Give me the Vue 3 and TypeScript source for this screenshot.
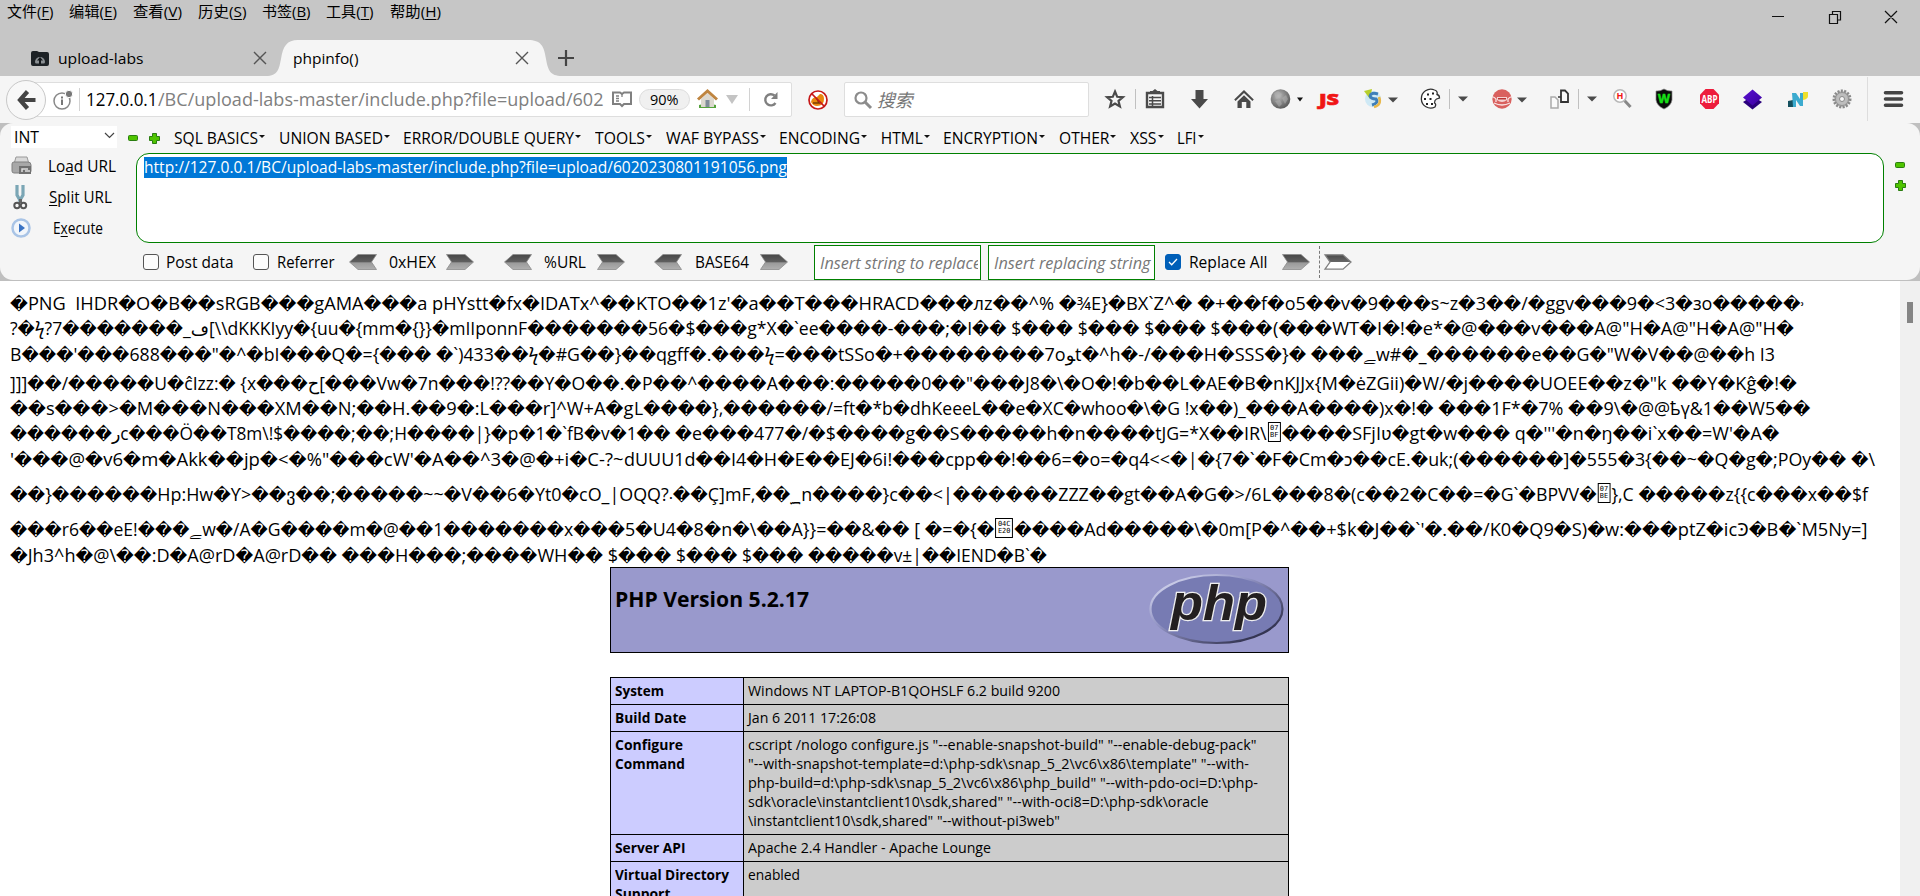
<script setup lang="ts">
import type { Directive } from 'vue'

interface Menu { label: string; key?: string; w: number }
interface Piece { text: string; kind: 'text' | 'box' | 'mark' }
interface Segment { text: string; w: number }
interface Line { h: number; segs: Segment[] }
interface Cell { text: string; w: number }

// Condenses a run of text so that it takes exactly the given width.
const vFit: Directive<HTMLElement, number> = {
  mounted(el, { value }) {
    const natural = el.getBoundingClientRect().width
    el.style.width = `${value}px`
    el.style.transform = `scaleX(${value / natural})`
  }
}

const menus: Menu[] = [
  { label: '文件', key: 'F', w: 46.5 },
  { label: '编辑', key: 'E', w: 48 },
  { label: '查看', key: 'V', w: 49 },
  { label: '历史', key: 'S', w: 48.5 },
  { label: '书签', key: 'B', w: 48.5 },
  { label: '工具', key: 'T', w: 47.5 },
  { label: '帮助', key: 'H', w: 51 }
]

const hackMenus: Menu[] = [
  { label: 'SQL BASICS', w: 84 },
  { label: 'UNION BASED', w: 104 },
  { label: 'ERROR/DOUBLE QUERY', w: 171 },
  { label: 'TOOLS', w: 50 },
  { label: 'WAF BYPASS', w: 93 },
  { label: 'ENCODING', w: 81 },
  { label: 'HTML', w: 42 },
  { label: 'ENCRYPTION', w: 95 },
  { label: 'OTHER', w: 50.5 },
  { label: 'XSS', w: 26.5 },
  { label: 'LFI', w: 19.5 }
]

const makeLine = (h: number, xs: number[], texts: string[]): Line => ({
  h,
  segs: texts.map((text, i) => ({ text, w: xs[i + 1] - xs[i] }))
})

const lines: Line[] = [
  makeLine(25, [10, 635.5, 1261, 1804], [
    '�PNG  IHDR�O�B��sRGB���gAMA���a pHYstt�fx�IDATx^��',
    "KTO��1z'�a��T���HRACD���лz��^% �¾E}�BX`Z^� �+��",
    'f�o5��v�9���s~z�3��/�ggv���9�<3�зo�����˒'
  ]),
  makeLine(25, [10, 648, 1272.5, 1793.5], [
    '?�ϟ?7�������_ڡ[\\\\dKKKIyy�{uu�{mm�{}}�mIIponnF�������',
    '56�$���g*X�`ee����-���;�I�� $��� $��� $��� $���',
    '(���WT�I�!�e*�@���v���A@"H�A@"H�A@"H�'
  ]),
  makeLine(26, [10, 656, 1282, 1775], [
    'B���\'���688���"�^�bI���Q�={��� �`)433��ϟ�#G��}��',
    'qgff�.���ϟ=���tSSo�+��������7oﻮt�^h�-/���H�SSS�',
    '}� ���ﮯw#�_������e��G�"W�V��@��h I3'
  ]),
  makeLine(29, [10, 641.5, 1272.5, 1796.5], [
    ']]]��/�����U�ĉIzz:� {x���ح[���Vw�7n���!??��Y�O��.�',
    'P��^����A���:�����0��"���J8�\\�O�!�b��L�AE�B�',
    'nKJJx{M�ėZGii)�W/�j����UOEE��z�"k ��Y�Kĝ�!�'
  ]),
  makeLine(25, [10, 633.5, 1297, 1810.5], [
    '��s���>�M���N���XM��N;��H.��9�:L���r]^W+A�g',
    'L����},������/=ft�*b�dhKeeeL��e�XC�whoo�\\�G !x��)_���',
    'A����)x�!� ���1F*�7% ��9\\�@@ҍү&1��W5��'
  ]),
  makeLine(25, [10, 692, 1244, 1779.5], [
    '������رc���Ö��T8m\\!$����;��;H����|}�p�1�`fB�v�1�� �',
    'e���477�/�$����g��S�����h�n����tJG=*X��',
    "IR\\07BF|����SFjIʋ�gt�w��� q�'''�n�ŋ��i`x��=W'�A�"
  ]),
  makeLine(26, [10, 623.5, 1272, 1875], [
    '\'���@�v6�m�Akk��jp�<�%"���cW\'�A��^3�@�+i�C-?~',
    'dUUU1d��I4�H�E��EJ�6i!���cpp��!��6=�o=�q4<<�|�{7�`�',
    'F�Cm�ͻ��cE.�uk;(������]�555�3{��~�Q�g�;POy�� �\\'
  ]),
  makeLine(35, [10, 661, 1261.5, 1867.5], [
    '��}������Hp:Hw�ϒ>��ვ��;�����~~�V��6�Yt0�cO_|OQQ',
    '?܁��Ç]mF,��؁n����}c��<|������ZZZ��gt��A�G�>/6',
    'L���8�(c��2�C��=�G`�BPVV�07BE|},C �����z{{c���x��$f'
  ]),
  makeLine(35, [10, 625, 1251, 1867.5], [
    '���r6��eE!���ﮯw�/A�G����m�@��1�������x���',
    '5�U4�8�n�\\��A}}=��&�� [ �=�{�04CE20|����Ad�����\\�0m[',
    "P�^��+$k�J��`'�.��/K0�Q9�S)�w:���ptZ�icϿ�B�`M5Ny=]"
  ]),
  makeLine(26, [10, 676, 1047], [
    '�Jh3^h�@\\��:D�A@rD�A@rD�� ���H���;����WH�� $��� ',
    '$��� $��� �����v±|��IEND�B`�'
  ])
]

// Splits a run into plain text, replacement marks and hex boxes for unmapped code points.
const split = (text: string): Piece[] =>
  text.split(/(�|07BF\||07BE\||04CE20\|)/).filter(Boolean).map((t) => {
    if (t === '�') return { text: t, kind: 'mark' }
    if (/^0[47][0-9A-F]+\|$/.test(t)) return { text: t.slice(0, -1), kind: 'box' }
    return { text: t, kind: 'text' }
  })

const halves = (t: string): string[] => [t.slice(0, t.length / 2), t.slice(t.length / 2)]

const info: { head: Cell[]; body: Cell[] }[] = [
  { head: [{ text: 'System', w: 49 }], body: [{ text: 'Windows NT LAPTOP-B1QOHSLF 6.2 build 9200', w: 312 }] },
  { head: [{ text: 'Build Date', w: 71.5 }], body: [{ text: 'Jan 6 2011 17:26:08', w: 128 }] },
  {
    head: [{ text: 'Configure', w: 68 }, { text: 'Command', w: 70 }],
    body: [
      { text: 'cscript /nologo configure.js "--enable-snapshot-build" "--enable-debug-pack"', w: 508.5 },
      { text: '"--with-snapshot-template=d:\\php-sdk\\snap_5_2\\vc6\\x86\\template" "--with-', w: 501 },
      { text: 'php-build=d:\\php-sdk\\snap_5_2\\vc6\\x86\\php_build" "--with-pdo-oci=D:\\php-', w: 510 },
      { text: 'sdk\\oracle\\instantclient10\\sdk,shared" "--with-oci8=D:\\php-sdk\\oracle', w: 460.5 },
      { text: '\\instantclient10\\sdk,shared" "--without-pi3web"', w: 312 }
    ]
  },
  { head: [{ text: 'Server API', w: 70.5 }], body: [{ text: 'Apache 2.4 Handler - Apache Lounge', w: 243 }] },
  {
    head: [{ text: 'Virtual Directory', w: 114 }, { text: 'Support', w: 55.5 }],
    body: [{ text: 'enabled', w: 52 }]
  }
]
</script>

<template>
  <div class="window">
    <svg class="defs" width="0" height="0">
      <defs>
        <linearGradient id="steel" x1="0" y1="0" x2="0" y2="1">
          <stop offset="0" stop-color="#484848" /><stop offset=".48" stop-color="#5e5e5e" />
          <stop offset=".56" stop-color="#9a9a9a" /><stop offset="1" stop-color="#b0b0b0" />
        </linearGradient>
        <linearGradient id="steelOpen" x1="0" y1="0" x2="0" y2="1">
          <stop offset="0" stop-color="#4a4a4a" /><stop offset=".48" stop-color="#666" />
          <stop offset=".5" stop-color="#fff" /><stop offset="1" stop-color="#fff" />
        </linearGradient>
        <radialGradient id="ball" cx=".4" cy=".35" r=".7">
          <stop offset="0" stop-color="#bbb" /><stop offset="1" stop-color="#555" />
        </radialGradient>
        <linearGradient id="violet" x1="0" y1="0" x2="1" y2="1">
          <stop offset="0" stop-color="#5a10d0" /><stop offset="1" stop-color="#3a00a0" />
        </linearGradient>
        <linearGradient id="rim" x1="0" y1="0" x2="1" y2="1">
          <stop offset="0" stop-color="#e6e8f8" /><stop offset=".4" stop-color="#9193c4" /><stop offset="1" stop-color="#15152c" />
        </linearGradient>
      </defs>
    </svg>

    <header class="title">
      <nav class="menubar">
        <span v-for="m in menus" :key="m.label" v-fit="m.w" class="t">{{ m.label }}(<u>{{ m.key }}</u>)</span>
      </nav>
      <svg class="winctl" width="130" height="14" viewBox="0 0 130 14" fill="none" stroke="#111" stroke-width="1.2">
        <path d="M1 6.5H13M58.5 4.5h8v9h-8zM61.5 4V1.500h8v8.5h-2.500M114 1l12 12M126 1l-12 12" />
      </svg>
    </header>

    <div class="tabs">
      <div class="tab idle">
        <svg width="20" height="17" viewBox="0 0 20 17">
          <path d="M1 3q0-2 2-2h4l2 1h8q2 0 2 2v10q0 2-2 2H3q-2 0-2-2z" fill="#1d2226" />
          <path d="M5 12a5 5 0 0 1 10 0q0 1.500-1.500 1.500h-7Q5 13.500 5 12z" fill="#8b9094" />
          <path d="M10 7l3 3.500h-2V14H9v-3.500H7z" fill="#14181b" />
        </svg>
        <span v-fit="85.5" class="t">upload-labs</span>
        <svg class="close" width="14" height="14" viewBox="0 0 14 14" stroke="#555" stroke-width="1.400"><path d="M1 1l12 12M13 1L1 13" /></svg>
      </div>
      <div class="tab active">
        <svg class="shape" width="296" height="36" viewBox="0 0 296 36">
          <path d="M0 36C12 36 13 29 15 19 17 6 21 0 32 0H262C275 0 278 6 280 19c2 11 4 17 16 17z" fill="#f5f5f5" />
        </svg>
        <span v-fit="65.5" class="t">phpinfo()</span>
        <svg class="close" width="14" height="14" viewBox="0 0 14 14" stroke="#555" stroke-width="1.400"><path d="M1 1l12 12M13 1L1 13" /></svg>
      </div>
      <svg class="plus" width="16" height="16" viewBox="0 0 16 16" stroke="#444" stroke-width="2.200"><path d="M8 0v16M0 8h16" /></svg>
    </div>

    <div class="navbar">
      <div class="urlbar">
        <div class="back">
          <svg width="19" height="20" viewBox="0 0 19 20" fill="none" stroke="#444" stroke-width="4.200"><path d="M10.500 1.500L3 10l7.500 8.500M3 10h15.500" /></svg>
        </div>
        <svg class="info" width="20" height="20" viewBox="0 0 20 20">
          <circle cx="9" cy="11" r="8" fill="none" stroke="#888" stroke-width="1.500" />
          <path d="M8 9.500h2V15H8zM8 6.500h2v2H8z" fill="#777" /><circle cx="16" cy="4" r="3.700" fill="#777" stroke="#fff" />
        </svg>
        <i class="bar" />
        <span class="addr"><span v-fit="71.5" class="t dark">127.0.0.1</span><span v-fit="445.5" class="t">/BC/upload-labs-master/include.php?file=upload/602</span></span>
        <svg class="reader" width="20" height="17" viewBox="0 0 20 17" fill="none" stroke="#808080" stroke-width="2">
          <path d="M10 15L8 13H1V1.500h7l2 1.500 2-1.500h7V13h-7z" /><path d="M4 5h3M4 7.500h3M4 10h3M10 3v3" stroke-width="1.300" />
        </svg>
        <span class="zoom"><span v-fit="28.5" class="t">90%</span></span>
        <svg class="house" width="21" height="19" viewBox="0 0 21 19">
          <path d="M2 15q8-3 17 0v3H2z" fill="#55a33c" /><path d="M4 9l6.500-6L17 9v8H4z" fill="#dcd8cf" />
          <path d="M8.500 10h4v7h-4z" fill="#7f8c99" /><path d="M1 9.500L10.500 1 20 9.500" fill="none" stroke="#bf8540" stroke-width="3" />
        </svg>
        <svg class="drop" width="12" height="9" viewBox="0 0 12 9"><path d="M0 0h12L6 9z" fill="#c4c4c4" /></svg>
        <i class="bar" />
        <svg class="reload" width="16" height="16" viewBox="0 0 16 16">
          <path d="M12.500 11A5.600 5.600 0 1 1 11.500 3.500" fill="none" stroke="#808080" stroke-width="2.400" /><path d="M14.500 0v7H8z" fill="#808080" />
        </svg>
      </div>
      <svg class="blocked" width="20" height="20" viewBox="0 0 20 20">
        <circle cx="10" cy="10" r="9" fill="#fff" /><path d="M3 12q1-5 6-5l3-3q4 0 4 5 0 7-7 7-4 0-6-4z" fill="#e8860c" />
        <path d="M5 13h7M9 9l2 4" stroke="#7b3c00" stroke-width="1.500" />
        <circle cx="10" cy="10" r="9" fill="none" stroke="#c61818" stroke-width="1.700" /><path d="M3.500 3.500l13 13" stroke="#c61818" stroke-width="1.700" />
      </svg>
      <div class="search">
        <svg width="18" height="18" viewBox="0 0 18 18" fill="none" stroke="#8c8c8c"><circle cx="7" cy="7" r="5.500" stroke-width="2.200" /><path d="M11 11l6 6" stroke-width="3" /></svg>
        <span v-fit="35.5" class="t slant">搜索</span>
      </div>
      <div class="tools">
        <svg width="20" height="22" viewBox="0 0 20 22"><path d="M10 3.500l2.200 5.300 5.700.4-4.400 3.700 1.400 5.600-4.900-3-4.900 3 1.400-5.600L2.100 9.200l5.700-.4z" fill="none" stroke="#4a4a4a" stroke-width="2.200" /></svg>
        <i class="rule" />
        <svg width="20" height="22" viewBox="0 0 20 22"><path d="M2 5h16v14H2z" fill="none" stroke="#4a4a4a" stroke-width="2.400" /><path d="M5 6V3h2.500L10 1l2.500 2H15v3z" fill="#4a4a4a" /><path d="M4 9.500h12M4 12.800h12M4 16h12M7.500 8v10" stroke="#4a4a4a" stroke-width="1.500" /></svg>
        <svg width="19" height="22" viewBox="0 0 19 22"><path d="M5.500 2h8v9H18l-8.500 9.500L1 11h4.500z" fill="#4a4a4a" /></svg>
        <svg width="20" height="22" viewBox="0 0 20 22"><path d="M10 2L.2 11.600l1.400 1.400L10 5l8.400 8 1.400-1.400zM3.500 13.500L10 7.300l6.500 6.200V20h-4.200v-6H7.800v6H3.500z" fill="#4a4a4a" /></svg>
        <svg width="21" height="22" viewBox="0 0 21 22"><circle cx="10.500" cy="11" r="9.800" fill="url(#ball)" /><path d="M4 5l4-2 4 3-2 4-4 1zM12 10l4-3 2 4-3 5zM5 13l5-1 2 4-3 3z" fill="#b4b4b4" opacity=".5" /></svg>
        <svg width="8" height="22" viewBox="0 0 8 22"><path d="M1 9.500h6l-3 4z" fill="#111" /></svg>
        <svg width="20" height="22" viewBox="0 0 20 22"><text x="0" y="16.500" textLength="20" lengthAdjust="spacingAndGlyphs" class="js">JS</text></svg>
        <svg width="18" height="22" viewBox="0 0 18 22"><circle cx="9" cy="11" r="8" fill="#cfe9f5" /><path d="M0 3l8-2-2 10z" fill="#b7cf2c" /><path d="M14 6q-7-2-8 2 1 3 6 3 3 4-4 6" fill="none" stroke="#3f7fb8" stroke-width="3" /><path d="M15 9q3 8-5 10" fill="none" stroke="#e9b84a" stroke-width="2.600" /></svg>
        <svg width="10" height="22" viewBox="0 0 10 22"><path d="M0 9.500h10l-5 5z" fill="#4a4a4a" /></svg>
        <svg width="21" height="22" viewBox="0 0 21 22"><path d="M14.500 2A9.400 9.400 0 1 0 15 19q1.500-3-.5-4 0-3 2-4l3-1q0-3-2.500-3.500Q18 3 14.500 2z" fill="#fff" stroke="#333" stroke-width="1.300" /><path d="M7 5.500h2v2H7zM12 4.500h2v2h-2zM4 10h2v2H4zM9.500 10h2v2h-2zM6 15h2v2H6zM11 15h2v2h-2z" fill="#222" /></svg>
        <i class="rule" />
        <svg width="10" height="22" viewBox="0 0 10 22"><path d="M0 8.500h10l-5 5z" fill="#4a4a4a" /></svg>
        <svg width="20" height="22" viewBox="0 0 20 22"><circle cx="10" cy="11" r="9.700" fill="#d9605e" /><path d="M0 8.500q3 1 4 2.500v3M20 8.500q-3 1-4 2.500v3M2 15q8 4 16 0" fill="none" stroke="#f8e4e4" stroke-width="1.300" /><path d="M5 9h10v3q-5 4-10 0z" fill="#f4d2d2" /><path d="M6 10h8v1.500H6z" fill="#b33" /></svg>
        <svg width="10" height="22" viewBox="0 0 10 22"><path d="M0 9.500h10l-5 5z" fill="#4a4a4a" /></svg>
        <svg width="19" height="22" viewBox="0 0 19 22" fill="#fafafa"><path d="M1 9h4l3 3v8H1z" stroke="#aaa" stroke-width="1.500" /><path d="M11 2.500h4l3 3V14h-7z" stroke="#333" stroke-width="1.800" /><path d="M8 9h3" stroke="#333" stroke-width="1.500" /></svg>
        <i class="rule" />
        <svg width="10" height="22" viewBox="0 0 10 22"><path d="M0 8.500h10l-5 5z" fill="#4a4a4a" /></svg>
        <svg width="19" height="22" viewBox="0 0 19 22"><path d="M11 12l6.500 7" stroke="#888" stroke-width="3" /><circle cx="7" cy="8" r="6.200" fill="#fff" stroke="#b8b8b8" stroke-width="1.500" /><text x="3.500" y="11" class="mini red">H</text></svg>
        <svg width="18" height="22" viewBox="0 0 18 22"><path d="M9 1q4 2.500 8 2v9q-1 6-8 9-7-3-8-9V3q4 .5 8-2z" fill="#0b0b0b" stroke="#888" stroke-width=".7" /><text x="3" y="15" textLength="12" lengthAdjust="spacingAndGlyphs" class="mini green">W</text></svg>
        <svg width="21" height="22" viewBox="0 0 21 22"><path d="M6.500 1h8L20 6.800v8.400L14.500 21h-8L1 15.200V6.800z" fill="#ed1c3c" /><text x="2.500" y="14.800" textLength="16" lengthAdjust="spacingAndGlyphs" class="mini white">ABP</text></svg>
        <svg width="21" height="22" viewBox="0 0 21 22"><path d="M1 14l9.500 7.500L20 14l-4-2.500H5z" fill="#2a007c" /><path d="M10.500 1.500L20 9.500l-9.500 8-9.500-8z" fill="url(#violet)" /></svg>
        <svg width="21" height="22" viewBox="0 0 21 22"><path d="M0 13l5-1v7H0z" fill="#15505f" /><path d="M4 5h4l4 6V5h3v13h-3L8 12v7H5z" fill="#3cabcf" /><path d="M15 4h5v4q0 3-5 4z" fill="#efe02b" /></svg>
        <svg width="20" height="22" viewBox="0 0 20 22"><circle cx="10" cy="11" r="8" fill="#c4c4c4" stroke="#8a8a8a" stroke-width="3" stroke-dasharray="2 1.300" /><circle cx="10" cy="11" r="6.500" fill="#bdbdbd" stroke="#919191" /><circle cx="10" cy="11" r="2.500" fill="#f5f5f5" stroke="#8a8a8a" /></svg>
        <i class="rule tall" />
        <svg width="20" height="22" viewBox="0 0 20 22"><path d="M1.500 4.800h16M1.500 11h16M1.500 17.200h16" stroke="#444" stroke-width="3.600" stroke-linecap="round" /></svg>
      </div>
    </div>

    <section class="hackbar-back">
      <div class="hackbar">
        <div class="hackmenu">
          <div class="select"><span v-fit="25" class="t">INT</span><svg width="11" height="7" viewBox="0 0 11 7" fill="none" stroke="#444" stroke-width="1.200"><path d="M1 1l4.500 4.500L10 1" /></svg></div>
          <svg class="minus" width="10" height="6" viewBox="0 0 10 6"><rect x=".5" y=".5" width="9" height="5" rx="1" fill="#4fc400" stroke="#2a7d10" /></svg>
          <svg class="add" width="11" height="11" viewBox="0 0 11 11"><path d="M3.500.5h4v3h3v4h-3v3h-4v-3h-3v-4h3z" fill="#4fc400" stroke="#2a7d10" /></svg>
          <span v-for="m in hackMenus" :key="m.label" class="entry"><span v-fit="m.w" class="t">{{ m.label }}</span><svg width="6" height="4" viewBox="0 0 6 4"><path d="M0 0h6L3 3z" fill="#111" /></svg></span>
        </div>

        <div class="mid">
          <div class="actions">
            <svg width="22" height="20" viewBox="0 0 22 20"><path d="M5 1h11l2 7H3z" fill="#d8d8d8" stroke="#999" /><path d="M1 8q0-2 2-2h14q3 0 3 3v6q0 2-2 2H3q-2 0-2-2z" fill="#a8a8a8" stroke="#808080" /><path d="M8 10h12v8H8z" fill="#707070" /><path d="M11 16v-3h6M14 15h5" stroke="#ddd" stroke-width="1.500" fill="none" /></svg>
            <span v-fit="68" class="t">Lo<u>a</u>d URL</span>
            <svg class="cut" width="22" height="26" viewBox="0 0 22 26" fill="none"><path d="M6 1v10l4 7M12 1v10l-4 7" stroke="#7ba6b5" stroke-width="3.200" /><path d="M8 15h3v4H8z" fill="#666" /><circle cx="6" cy="21.500" r="2.700" stroke="#555" stroke-width="2" /><circle cx="12.500" cy="21.500" r="2.700" stroke="#555" stroke-width="2" /></svg>
            <span v-fit="65.500" class="t split"><u>S</u>plit URL</span>
            <svg width="22" height="22" viewBox="0 0 22 22"><circle cx="10" cy="11" r="8.500" fill="#f2f6fb" stroke="#a9c4e6" stroke-width="2.500" /><path d="M8 6.500l6 4.500-6 4.500z" fill="#3b74c4" /></svg>
            <span v-fit="56" class="t exec">E<u>x</u>ecute</span>
          </div>
          <div class="box"><span class="sel"><span v-fit="643" class="t">http://127.0.0.1/BC/upload-labs-master/include.php?file=upload/6020230801191056.png</span></span></div>
          <div class="side">
            <svg width="10" height="6" viewBox="0 0 10 6"><rect x=".5" y=".5" width="9" height="5" rx="1" fill="#4fc400" stroke="#2a7d10" /></svg>
            <svg width="11" height="11" viewBox="0 0 11 11"><path d="M3.500.5h4v3h3v4h-3v3h-4v-3h-3v-4h3z" fill="#4fc400" stroke="#2a7d10" /></svg>
          </div>
        </div>

        <div class="encode">
          <i class="check" /><span v-fit="67.500" class="t post">Post data</span>
          <i class="check" /><span v-fit="57.500" class="t ref">Referrer</span>
          <svg class="arw" viewBox="0 0 28 16"><path d="M27.500.5H9L.5 8 9 15.500h18.500L22.500 8z" fill="url(#steel)" stroke="#8c8c8c" stroke-width=".8" /></svg>
          <span v-fit="47" class="t mid-a">0xHEX</span>
          <svg class="arw" viewBox="0 0 28 16"><path d="M.5.5H19L27.500 8 19 15.500H.5L5.500 8z" fill="url(#steel)" stroke="#8c8c8c" stroke-width=".8" /></svg>
          <svg class="arw gap" viewBox="0 0 28 16"><path d="M27.500.5H9L.5 8 9 15.500h18.500L22.500 8z" fill="url(#steel)" stroke="#8c8c8c" stroke-width=".8" /></svg>
          <span v-fit="42" class="t mid-b">%URL</span>
          <svg class="arw" viewBox="0 0 28 16"><path d="M.5.5H19L27.500 8 19 15.500H.5L5.500 8z" fill="url(#steel)" stroke="#8c8c8c" stroke-width=".8" /></svg>
          <svg class="arw gap2" viewBox="0 0 28 16"><path d="M27.500.5H9L.5 8 9 15.500h18.500L22.500 8z" fill="url(#steel)" stroke="#8c8c8c" stroke-width=".8" /></svg>
          <span v-fit="54" class="t mid-c">BASE64</span>
          <svg class="arw" viewBox="0 0 28 16"><path d="M.5.5H19L27.500 8 19 15.500H.5L5.500 8z" fill="url(#steel)" stroke="#8c8c8c" stroke-width=".8" /></svg>
          <div class="field first"><div class="clip"><span v-fit="161" class="t">Insert string to replace</span></div></div>
          <div class="field"><div class="clip"><span v-fit="156.500" class="t">Insert replacing string</span></div></div>
          <i class="check on"><svg width="10" height="8" viewBox="0 0 10 8" fill="none" stroke="#fff" stroke-width="1.300"><path d="M1 4l2.700 2.700L9 1" /></svg></i>
          <span v-fit="78.500" class="t all">Replace All</span>
          <svg class="arw" viewBox="0 0 28 16"><path d="M.5.5H19L27.500 8 19 15.500H.5L5.500 8z" fill="url(#steel)" stroke="#8c8c8c" stroke-width=".8" /></svg>
          <i class="dash" />
          <svg class="arw" viewBox="0 0 28 16"><path d="M1 .8h18L27 8l-8 7.200H1L6 8z" fill="url(#steelOpen)" stroke="#808080" stroke-width="1.300" /></svg>
        </div>
      </div>
    </section>

    <main class="page">
      <div class="doc">
        <p v-for="(l, i) in lines" :key="i" class="line" :style="{ height: l.h + 'px' }">
          <span v-for="(s, j) in l.segs" :key="j" v-fit="s.w" class="t raw"><template v-for="(p, k) in split(s.text)" :key="k"><i v-if="p.kind === 'mark'" class="mark">{{ p.text }}</i><span v-else-if="p.kind === 'box'" class="hex" :class="{ wide: p.text.length > 4 }"><b v-for="h in halves(p.text)" :key="h">{{ h }}</b></span><template v-else>{{ p.text }}</template></template></span>
        </p>
        <div class="center">
          <div class="banner">
            <span v-fit="194" class="t">PHP Version 5.2.17</span>
            <svg width="136" height="72" viewBox="0 0 136 72">
              <ellipse cx="68.500" cy="35" rx="66" ry="34" fill="#777bb3" stroke="url(#rim)" stroke-width="2.200" />
              <text x="23" y="46" textLength="96" lengthAdjust="spacingAndGlyphs" class="php">php</text>
            </svg>
          </div>
          <div class="info-table">
            <div v-for="(r, i) in info" :key="i" class="row">
              <div class="head"><div v-for="c in r.head" :key="c.text"><span v-fit="c.w" class="t">{{ c.text }}</span></div></div>
              <div class="body"><div v-for="c in r.body" :key="c.text"><span v-fit="c.w" class="t">{{ c.text }}</span></div></div>
            </div>
          </div>
        </div>
      </div>
      <div class="scroll"><i /></div>
    </main>
  </div>
</template>

<style>
body { margin: 0; overflow: hidden; }
</style>

<style scoped>
.window { width: 1920px; height: 896px; overflow: hidden; display: flex; flex-direction: column; background: #fff; color: #000; font: 15px/20px "Open Sans", "Noto Sans", "Noto Sans CJK SC", "DejaVu Sans", sans-serif; }
.window * { box-sizing: border-box; }
.window svg { display: block; flex: none; overflow: visible; }
.defs { position: absolute; }
.t { display: inline-block; flex: none; white-space: pre; transform-origin: 0 50%; }
u { text-decoration: underline; text-underline-offset: 2px; text-decoration-thickness: 1px; }

.title { height: 40px; flex: none; background: #c6c6c6; display: flex; justify-content: space-between; align-items: flex-start; padding: 0 19px 0 7px; }
.menubar { display: flex; gap: 15.8px; padding-top: 1px; }
.winctl { margin-top: 10px; }

.tabs { height: 36px; flex: none; background: #c6c6c6; display: flex; align-items: center; }
.tab { display: flex; align-items: center; height: 36px; }
.idle { width: 266px; padding-left: 30px; flex: none; }
.idle .t { margin-left: 7.5px; }
.idle .close { margin-left: 110px; }
.active { width: 296px; position: relative; padding-left: 26.7px; }
.active .t, .active .close { position: relative; }
.active .close { margin-left: 157px; }
.shape { position: absolute; left: 0; top: 0; }
.plus { margin-left: -4px; }

.navbar { height: 47px; flex: none; background: #f5f5f5; display: flex; align-items: center; }
.urlbar { width: 766px; height: 35px; margin-left: 26px; background: #fff; border: 1px solid #dedede; border-radius: 2px; display: flex; align-items: center; }
.back { width: 40px; height: 40px; flex: none; margin-left: -21px; border: 1px solid #c8c8c8; border-radius: 50%; background: #f8f8f8; display: flex; align-items: center; padding-left: 10px; }
.info { margin-left: 7px; }
.bar { width: 1px; height: 23px; background: #d2d2d2; flex: none; margin-left: 6px; }
.addr { margin-left: 6px; font-size: 18px; line-height: 24px; color: #808080; display: flex; margin-top: -1px; }
.dark { color: #000; }
.reader { margin-left: 9px; }
.zoom { margin-left: 7px; width: 51px; height: 21px; border: 1px solid #dcdcdc; border-radius: 11px; background: #f0f0f0; font-size: 14px; line-height: 19px; padding-left: 10px; flex: none; }
.house { margin-left: 7px; }
.drop { margin-left: 8px; }
.drop + .bar { margin-left: 11px; }
.reload { margin-left: 13px; }
.blocked { margin-left: 16px; }
.search { width: 245px; height: 35px; margin-left: 16px; background: #fff; border: 1px solid #dedede; border-radius: 2px; display: flex; align-items: center; padding-left: 9px; gap: 5px; font-size: 18px; color: #777; }
.slant { font-style: italic; }
.tools { margin-left: 16px; width: 815px; height: 47px; padding-bottom: 1px; display: grid; align-items: center; grid-template-columns: 30px 10px 45px 44px 36px 26px 23px 45px 24px 32px 29px 9px 34px 25px 33px 28px 9px 26px 42px 44px 43px 46px 44px 35px 17px 36px; }
.rule { width: 1px; height: 20px; background: #c0c0c0; }
.rule.tall { height: 44px; background: #ddd; }
.js { font: 800 16px "Open Sans", sans-serif; fill: #f01414; stroke: #f01414; stroke-width: .6px; }
.mini { font: bold 9px "Open Sans", sans-serif; }
.red { fill: #f01414; }
.green { fill: #17e017; stroke: #17e017; stroke-width: .5px; font-size: 12px; }
.white { fill: #fff; font-size: 10.5px; }

.hackbar-back { height: 158px; flex: none; background: #bfbfbf; }
.hackbar { height: 157px; background: #f5f5f5; border-radius: 13px; overflow: hidden; }
.hackmenu { height: 30px; display: flex; align-items: center; font-size: 15.5px; }
.select { width: 106px; height: 22px; margin: -2px 0 0 11px; padding: 0 2px 0 3px; background: #fff; display: flex; align-items: center; justify-content: space-between; flex: none; }
.select svg { margin-top: -4px; }
.minus { margin-left: 11px; }
.add { margin: 0 10.5px 0 11px; }
.entry { display: flex; align-items: center; gap: 1px; flex: none; }
.add + .entry { margin-left: 3.7px; }
.entry .t { margin-top: -1px; }
.entry .t + svg { margin-top: -3px; }
.entry + .entry { margin-left: 13.600px; }
.mid { display: flex; height: 90px; align-items: stretch; }
.actions { width: 136px; padding: 0 0 0 11px; display: grid; grid-template-columns: 37px auto; grid-auto-rows: 31px; align-items: center; justify-content: start; margin-top: -3px; font-size: 15.5px; }
.split { margin-left: 1px; }
.exec { margin-left: 4.5px; }
.box { width: 1748px; height: 90px; border: 1px solid #008000; border-radius: 13px; background: #fff; padding: 3px 0 0 7px; font-size: 15.5px; flex: none; }
.sel { display: block; width: 643px; height: 21px; background: #0078d7; color: #fff; }
.side { margin-left: 11px; display: flex; flex-direction: column; gap: 12px; padding-top: 9px; }
.encode { height: 37px; padding: 1px 0 0 143px; display: flex; align-items: center; font-size: 15.5px; }
.check { width: 16px; height: 16px; border: 1px solid #555; border-radius: 3px; background: #fcfcfc; flex: none; display: flex; align-items: center; justify-content: center; }
.check.on { background: #005fb8; border-color: #005fb8; margin-left: 10px; }
.post { margin: 0 19px 0 7px; }
.ref { margin: 0 15px 0 8px; }
.arw { width: 28px; height: 16px; }
.mid-a { margin: 0 10px 0 12px; }
.mid-b { margin: 0 11px 0 12px; }
.mid-c { margin: 0 11px 0 13px; }
.gap { margin-left: 29.5px; }
.gap2 { margin-left: 29px; }
.field { width: 167px; height: 35px; border: 1px solid #008000; background: #fff; flex: none; padding: 7px 2px 0 5px; margin-left: 7px; color: #777; font-style: italic; }
.field.first { margin-left: 26px; }
.clip { overflow: hidden; height: 24px; }
.all { margin: 0 14.5px 0 8px; }
.dash { height: 32px; border-left: 1px dashed #777; margin: 0 4px 0 9px; }

.page { flex: 1; display: flex; min-height: 0; }
.doc { flex: 1; padding: 10px 0 0 10px; }
.line { margin: 0; display: flex; align-items: flex-end; font-size: 18px; line-height: 25px; }
.raw { height: 25px; unicode-bidi: bidi-override; direction: ltr; }
.mark { display: inline-block; width: 17.700px; height: 20px; font: normal 17.200px/20px "DejaVu Sans", sans-serif; }
.hex { display: inline-flex; flex-direction: column; justify-content: center; width: 13px; height: 20px; border: 1px solid #000; font: 7px/7px "DejaVu Sans Mono", monospace; text-align: center; vertical-align: 10px; margin: -4px 1px; }
.hex.wide { width: 18px; }
.hex b { font-weight: normal; }
.center { width: 679px; margin: -1px 0 0 600px; }
.banner { height: 86px; border: 1px solid #000; background: #9999cc; display: flex; justify-content: space-between; padding: 6px 4px 0 4px; font-size: 21px; font-weight: bold; }
.banner .t { line-height: 28px; height: 28px; margin-top: 11px; }
.php { font: italic bold 50px "Liberation Sans", sans-serif; fill: #231f20; stroke: #eee; stroke-width: 2.500px; paint-order: stroke; }
.info-table { margin-top: 24px; border: solid #000; border-width: 1px 1px 0; font-size: 14px; line-height: 19px; }
.row { display: grid; grid-template-columns: 133px 1fr; border-bottom: 1px solid #000; }
.head { background: #ccccff; border-right: 1px solid #000; padding: 3px 4px 4px; font-weight: bold; }
.body { background: #cccccc; padding: 3px 4px 4px; }
.head > div, .body > div { height: 19px; }
.scroll { width: 20px; background: #f0f0f0; padding: 21px 0 0 7px; }
.scroll i { display: block; width: 6px; height: 21px; background: #858585; }
</style>
